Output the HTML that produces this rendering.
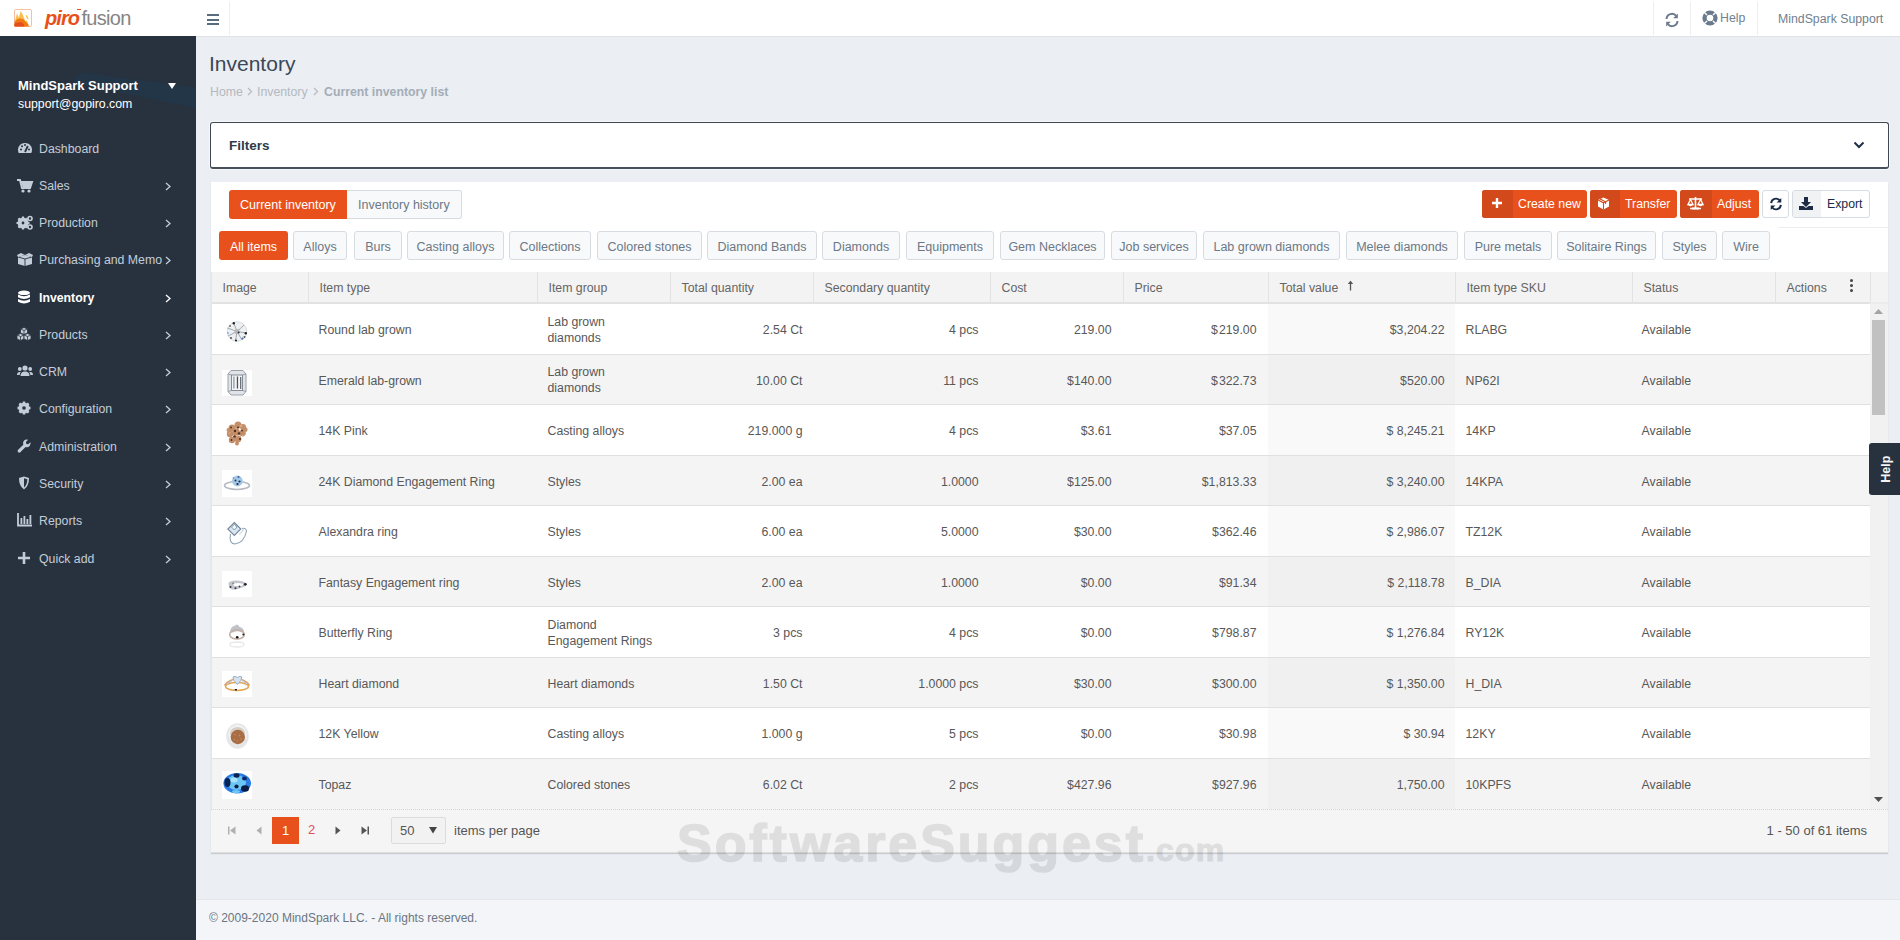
<!DOCTYPE html>
<html><head><meta charset="utf-8">
<style>
*{box-sizing:border-box;margin:0;padding:0}
html,body{width:1900px;height:940px;overflow:hidden}
body{position:relative;background:#ebeef2;font-family:"Liberation Sans",sans-serif;color:#555;font-size:12px}
.a{position:absolute}
#hdr{left:0;top:0;width:1900px;height:36px;background:#fff}
#hdrline{left:196px;top:36px;width:1704px;height:1px;background:#dfe3e8}
.vsep{top:2px;width:1px;height:33px;background:#eceef1}
#side{left:0;top:36px;width:196px;height:904px;background:#28323e;overflow:hidden}
.mi{position:absolute;left:0;width:196px;height:20px;color:#c3cdd8;font-size:12.3px}
.mi .ic{position:absolute;left:17px;top:2px;width:16px;height:14px}
.mi .tx{position:absolute;left:39px;top:3px;white-space:nowrap}
.mi .ar{position:absolute;left:165px;top:5px}
.nw{white-space:nowrap}
</style></head><body>

<!-- header -->
<div id="hdr" class="a">
  <!-- logo icon -->
  <svg class="a" style="left:14px;top:9px" width="18" height="18" viewBox="0 0 18 18">
    <rect x="0.5" y="0.5" width="17" height="17" rx="1.5" fill="#fff" stroke="#f5bfa6" stroke-width="1"/>
    <path d="M1 12 L3 4.5 L4.8 8.5 L6.8 2 L9.8 8 L11.2 12.5 L12.8 11.2 L14.5 16 L1 16 Z" fill="#fbbd4c"/>
    <path d="M12.2 6.3 L14 10" stroke="#fbc24f" stroke-width="1.5"/>
    <path d="M0.5 17.5 L0.5 13 Q3 9.2 7 9.6 Q10 10 12 13 L14 15 Q15 16.5 15 17.5 Z" fill="#ef7a14"/>
    <path d="M0.5 17.5 V14.8 Q3 12.8 7 13.2 Q9.5 13.6 10.5 17.5 Z" fill="#e44d1b"/>
  </svg>
  <div class="a nw" style="left:45px;top:8px;font-size:20px;line-height:20px;font-style:italic;font-weight:700;color:#e8501a;letter-spacing:-0.9px">piro</div>
  <div class="a" style="left:76.5px;top:9.3px;width:4.5px;height:1.2px;background:#e8501a"></div>
  <div class="a nw" style="left:81.5px;top:8px;font-size:20px;line-height:20px;color:#858585;letter-spacing:-0.7px">fusion</div>
  <!-- hamburger -->
  <div class="a" style="left:207px;top:14px;width:12px;height:2px;background:#5b6b7e"></div>
  <div class="a" style="left:207px;top:18.5px;width:12px;height:2px;background:#5b6b7e"></div>
  <div class="a" style="left:207px;top:23px;width:12px;height:2px;background:#5b6b7e"></div>
  <div class="a vsep" style="left:229px"></div>
  <div class="a vsep" style="left:1653px"></div>
  <div class="a vsep" style="left:1690px"></div>
  <div class="a vsep" style="left:1757px"></div>
  <!-- refresh -->
  <svg class="a" style="left:1664px;top:12px" width="16" height="16" viewBox="0 0 16 16">
    <path d="M2.5 7 A5.5 5.5 0 0 1 12.3 4" fill="none" stroke="#6a7a8c" stroke-width="2"/>
    <path d="M13.8 1.5 L13.8 6.2 L9.2 6.2 Z" fill="#6a7a8c"/>
    <path d="M13.5 9 A5.5 5.5 0 0 1 3.7 12" fill="none" stroke="#6a7a8c" stroke-width="2"/>
    <path d="M2.2 14.5 L2.2 9.8 L6.8 9.8 Z" fill="#6a7a8c"/>
  </svg>
  <!-- help lifebuoy -->
  <svg class="a" style="left:1702px;top:10px" width="16" height="16" viewBox="0 0 16 16">
    <circle cx="8" cy="8" r="7.6" fill="#6a7a8c"/><circle cx="8" cy="8" r="3.3" fill="#fff"/>
    <path d="M2.2 2.2 L5 5 M13.8 2.2 L11 5 M2.2 13.8 L5 11 M13.8 13.8 L11 11" stroke="#fff" stroke-width="1.4"/>
  </svg>
  <div class="a nw" style="left:1720px;top:10.7px;font-size:12.3px;color:#717f8f">Help</div>
  <div class="a nw" style="left:1778px;top:11.7px;font-size:12.3px;color:#717f8f">MindSpark Support</div>
</div>
<div id="hdrline" class="a"></div>

<!-- sidebar -->
<div id="side" class="a">
<svg class="a" style="left:0;top:0" width="196" height="80" viewBox="0 0 196 80"><path d="M73 47 Q76 38 82 36.6 L196 51.4 L196 72 Z" fill="#233647"/></svg>
<div class="a nw" style="left:18px;top:41.7px;font-size:13px;font-weight:700;color:#fff">MindSpark Support</div>
<svg class="a" style="left:168px;top:47px" width="8" height="6" viewBox="0 0 8 6"><path d="M0 0 L8 0 L4 6 Z" fill="#fff"/></svg>
<div class="a nw" style="left:18px;top:60.5px;font-size:12.3px;color:#fff">support@gopiro.com</div>
<div class="a" style="left:17px;top:104.5px;width:16px;height:16px"><svg width="16" height="16" viewBox="0 0 16 16" style="overflow:visible"><path d="M1.7 12 A7 7 0 1 1 14.3 12 Z" fill="#c3cdd8"/><path d="M8 11 L10.8 5" stroke="#28323e" stroke-width="1.8"/><circle cx="4" cy="8.5" r="1" fill="#28323e"/><circle cx="5" cy="5.2" r="1" fill="#28323e"/><circle cx="8" cy="4" r="1" fill="#28323e"/><circle cx="12" cy="8.5" r="1" fill="#28323e"/></svg></div>
<div class="a nw" style="left:39px;top:105.7px;font-size:12.3px;color:#c3cdd8;font-weight:400">Dashboard</div>
<div class="a" style="left:17px;top:141.5px;width:16px;height:16px"><svg width="16" height="16" viewBox="0 0 16 16" style="overflow:visible"><path d="M0 2 L3 2 L5 10 L13 10 L15 4 L4 4" fill="none" stroke="#c3cdd8" stroke-width="2"/><path d="M4.5 4 L14.5 4 L12.8 9 L5.5 9 Z" fill="#c3cdd8"/><circle cx="6" cy="13" r="1.6" fill="#c3cdd8"/><circle cx="12" cy="13" r="1.6" fill="#c3cdd8"/></svg></div>
<div class="a nw" style="left:39px;top:142.7px;font-size:12.3px;color:#c3cdd8;font-weight:400">Sales</div>
<svg class="a" style="left:165px;top:145.5px" width="6" height="9" viewBox="0 0 6 9"><path d="M1 1 L5 4.5 L1 8" fill="none" stroke="#c3cdd8" stroke-width="1.3"/></svg>
<div class="a" style="left:17px;top:178.5px;width:16px;height:16px"><svg width="16" height="16" viewBox="0 0 16 16" style="overflow:visible"><circle cx="6" cy="8" r="4" fill="none" stroke="#c3cdd8" stroke-width="3"/><path d="M6 1.5 V14.5 M-0.5 8 H12.5 M1.4 3.4 L10.6 12.6 M10.6 3.4 L1.4 12.6" stroke="#c3cdd8" stroke-width="2.2"/><circle cx="6" cy="8" r="1.4" fill="#28323e"/><circle cx="13" cy="3.5" r="2" fill="none" stroke="#c3cdd8" stroke-width="1.6"/><circle cx="13" cy="12" r="2" fill="none" stroke="#c3cdd8" stroke-width="1.6"/></svg></div>
<div class="a nw" style="left:39px;top:179.7px;font-size:12.3px;color:#c3cdd8;font-weight:400">Production</div>
<svg class="a" style="left:165px;top:182.5px" width="6" height="9" viewBox="0 0 6 9"><path d="M1 1 L5 4.5 L1 8" fill="none" stroke="#c3cdd8" stroke-width="1.3"/></svg>
<div class="a" style="left:17px;top:216.0px;width:16px;height:16px"><svg width="16" height="16" viewBox="0 0 16 16" style="overflow:visible"><path d="M1 5 L8 3 L15 5 L15 12 L8 14 L1 12 Z" fill="#c3cdd8"/><path d="M1 5 L8 7 L15 5 M8 7 V14" stroke="#28323e" stroke-width="0.9" fill="none"/><path d="M0 3 L4 1 L8 3 L12 1 L16 3 L15 5 L8 3 L1 5 Z" fill="#c3cdd8"/></svg></div>
<div class="a nw" style="left:39px;top:217.2px;font-size:12.3px;color:#c3cdd8;font-weight:400">Purchasing and Memo</div>
<svg class="a" style="left:165px;top:220.0px" width="6" height="9" viewBox="0 0 6 9"><path d="M1 1 L5 4.5 L1 8" fill="none" stroke="#c3cdd8" stroke-width="1.3"/></svg>
<div class="a" style="left:17px;top:253.5px;width:16px;height:16px"><svg width="16" height="16" viewBox="0 0 16 16" style="overflow:visible"><ellipse cx="7" cy="2.8" rx="6" ry="2.3" fill="#fff"/><path d="M1 4.5 Q7 8 13 4.5 V7.3 Q7 10.8 1 7.3 Z" fill="#fff"/><path d="M1 9 Q7 12.5 13 9 V11.8 Q7 15.3 1 11.8 Z" fill="#fff"/></svg></div>
<div class="a nw" style="left:39px;top:254.7px;font-size:12.3px;color:#fff;font-weight:700">Inventory</div>
<svg class="a" style="left:165px;top:257.5px" width="6" height="9" viewBox="0 0 6 9"><path d="M1 1 L5 4.5 L1 8" fill="none" stroke="#fff" stroke-width="1.3"/></svg>
<div class="a" style="left:17px;top:290.5px;width:16px;height:16px"><svg width="16" height="16" viewBox="0 0 16 16" style="overflow:visible"><g fill="#c3cdd8" stroke="#28323e" stroke-width="0.8"><path d="M7 0.5 L10.5 2 L10.5 6 L7 7.5 L3.5 6 L3.5 2 Z"/><path d="M3.5 6.5 L7 8 L7 12 L3.5 13.5 L0 12 L0 8 Z"/><path d="M10.5 6.5 L14 8 L14 12 L10.5 13.5 L7 12 L7 8 Z"/></g><path d="M3.5 2 L7 3.5 L10.5 2 M7 3.5 V7.5 M0 8 L3.5 9.5 L7 8 M3.5 9.5 V13.5 M7 8 L10.5 9.5 L14 8 M10.5 9.5 V13.5" fill="none" stroke="#28323e" stroke-width="0.8"/></svg></div>
<div class="a nw" style="left:39px;top:291.7px;font-size:12.3px;color:#c3cdd8;font-weight:400">Products</div>
<svg class="a" style="left:165px;top:294.5px" width="6" height="9" viewBox="0 0 6 9"><path d="M1 1 L5 4.5 L1 8" fill="none" stroke="#c3cdd8" stroke-width="1.3"/></svg>
<div class="a" style="left:17px;top:327.5px;width:16px;height:16px"><svg width="16" height="16" viewBox="0 0 16 16" style="overflow:visible"><circle cx="8" cy="4" r="2.6" fill="#c3cdd8"/><path d="M3.5 12 Q3.5 7.5 8 7.5 Q12.5 7.5 12.5 12 Z" fill="#c3cdd8"/><circle cx="2.8" cy="5" r="1.9" fill="#c3cdd8"/><circle cx="13.2" cy="5" r="1.9" fill="#c3cdd8"/><path d="M0 11 Q0 8 2.8 8 Q3.5 8 3.8 8.3 Q2.6 9.5 2.7 11 Z" fill="#c3cdd8"/><path d="M16 11 Q16 8 13.2 8 Q12.5 8 12.2 8.3 Q13.4 9.5 13.3 11 Z" fill="#c3cdd8"/></svg></div>
<div class="a nw" style="left:39px;top:328.7px;font-size:12.3px;color:#c3cdd8;font-weight:400">CRM</div>
<svg class="a" style="left:165px;top:331.5px" width="6" height="9" viewBox="0 0 6 9"><path d="M1 1 L5 4.5 L1 8" fill="none" stroke="#c3cdd8" stroke-width="1.3"/></svg>
<div class="a" style="left:17px;top:364.5px;width:16px;height:16px"><svg width="16" height="16" viewBox="0 0 16 16" style="overflow:visible"><circle cx="7" cy="7" r="4" fill="none" stroke="#c3cdd8" stroke-width="3.2"/><path d="M7 0.5 V13.5 M0.5 7 H13.5 M2.4 2.4 L11.6 11.6 M11.6 2.4 L2.4 11.6" stroke="#c3cdd8" stroke-width="2.4"/><circle cx="7" cy="7" r="1.8" fill="#28323e"/></svg></div>
<div class="a nw" style="left:39px;top:365.7px;font-size:12.3px;color:#c3cdd8;font-weight:400">Configuration</div>
<svg class="a" style="left:165px;top:368.5px" width="6" height="9" viewBox="0 0 6 9"><path d="M1 1 L5 4.5 L1 8" fill="none" stroke="#c3cdd8" stroke-width="1.3"/></svg>
<div class="a" style="left:17px;top:402.5px;width:16px;height:16px"><svg width="16" height="16" viewBox="0 0 16 16" style="overflow:visible"><path d="M13.5 3.2 L11.2 5.3 L9.4 4.9 L8.9 3 L11.1 0.8 Q8.5 0 6.9 1.8 Q5.5 3.4 6.3 5.7 L0.9 11.1 Q0.1 12.3 1.2 13.3 Q2.3 14.2 3.3 13.3 L8.6 7.9 Q10.9 8.6 12.4 7.2 Q14.1 5.6 13.5 3.2 Z" fill="#c3cdd8"/></svg></div>
<div class="a nw" style="left:39px;top:403.7px;font-size:12.3px;color:#c3cdd8;font-weight:400">Administration</div>
<svg class="a" style="left:165px;top:406.5px" width="6" height="9" viewBox="0 0 6 9"><path d="M1 1 L5 4.5 L1 8" fill="none" stroke="#c3cdd8" stroke-width="1.3"/></svg>
<div class="a" style="left:17px;top:439.5px;width:16px;height:16px"><svg width="16" height="16" viewBox="0 0 16 16" style="overflow:visible"><path d="M2 2 L7 0.5 L12 2 Q12 10 7 13.5 Q2 10 2 2 Z" fill="#c3cdd8"/><path d="M7 2.2 L10.3 3.2 Q10.2 9 7 11.4 Z" fill="#28323e"/></svg></div>
<div class="a nw" style="left:39px;top:440.7px;font-size:12.3px;color:#c3cdd8;font-weight:400">Security</div>
<svg class="a" style="left:165px;top:443.5px" width="6" height="9" viewBox="0 0 6 9"><path d="M1 1 L5 4.5 L1 8" fill="none" stroke="#c3cdd8" stroke-width="1.3"/></svg>
<div class="a" style="left:17px;top:476.5px;width:16px;height:16px"><svg width="16" height="16" viewBox="0 0 16 16" style="overflow:visible"><path d="M1 0 V12.5 H15" fill="none" stroke="#c3cdd8" stroke-width="1.8"/><rect x="3.5" y="5" width="1.8" height="6" fill="#c3cdd8"/><rect x="6.5" y="3" width="1.8" height="8" fill="#c3cdd8"/><rect x="9.5" y="6" width="1.8" height="5" fill="#c3cdd8"/><rect x="12.5" y="2" width="1.8" height="9" fill="#c3cdd8"/></svg></div>
<div class="a nw" style="left:39px;top:477.7px;font-size:12.3px;color:#c3cdd8;font-weight:400">Reports</div>
<svg class="a" style="left:165px;top:480.5px" width="6" height="9" viewBox="0 0 6 9"><path d="M1 1 L5 4.5 L1 8" fill="none" stroke="#c3cdd8" stroke-width="1.3"/></svg>
<div class="a" style="left:17px;top:514.5px;width:16px;height:16px"><svg width="16" height="16" viewBox="0 0 16 16" style="overflow:visible"><path d="M7 1 V13 M1 7 H13" stroke="#c3cdd8" stroke-width="2.6"/></svg></div>
<div class="a nw" style="left:39px;top:515.7px;font-size:12.3px;color:#c3cdd8;font-weight:400">Quick add</div>
<svg class="a" style="left:165px;top:518.5px" width="6" height="9" viewBox="0 0 6 9"><path d="M1 1 L5 4.5 L1 8" fill="none" stroke="#c3cdd8" stroke-width="1.3"/></svg>
</div>
<div class="a nw" style="left:209px;top:53px;font-size:21px;line-height:21px;color:#3a4756">Inventory</div>
<div class="a nw" style="left:210px;top:86px;font-size:12.3px;line-height:12.3px;color:#b3b9c0">Home</div>
<svg class="a" style="left:247px;top:87px" width="6" height="9" viewBox="0 0 6 9"><path d="M1 1 L4.5 4.5 L1 8" fill="none" stroke="#b7bdc4" stroke-width="1.3"/></svg>
<div class="a nw" style="left:257px;top:86px;font-size:12.3px;line-height:12.3px;color:#b3b9c0">Inventory</div>
<svg class="a" style="left:313px;top:87px" width="6" height="9" viewBox="0 0 6 9"><path d="M1 1 L4.5 4.5 L1 8" fill="none" stroke="#b7bdc4" stroke-width="1.3"/></svg>
<div class="a nw" style="left:324px;top:86px;font-size:12.3px;line-height:12.3px;color:#a3adb8;font-weight:700">Current inventory list</div>
<div class="a" style="left:210px;top:122px;width:1679px;height:47px;background:#fff;border:1px solid #3e4752;border-bottom:2px solid #46505a;border-radius:3px;box-shadow:0 0 0 1px #f6f8fa"></div>
<div class="a nw" style="left:229px;top:139px;font-size:13.5px;line-height:13.5px;color:#2f3b48;font-weight:700">Filters</div>
<svg class="a" style="left:1853px;top:141px" width="12" height="8" viewBox="0 0 12 8"><path d="M1.5 1.5 L6 6 L10.5 1.5" fill="none" stroke="#1f2f45" stroke-width="2"/></svg>
<div class="a" style="left:211px;top:182px;width:1677px;height:671px;background:#fff;box-shadow:0 1px 1px rgba(0,0,0,.14)"></div>
<div class="a" style="left:229px;top:190px;width:118px;height:29px;background:#e9511c;border-radius:3px 0 0 3px"></div>
<div class="a nw" style="left:240px;top:199px;font-size:12.5px;line-height:12.5px;color:#fff">Current inventory</div>
<div class="a" style="left:347px;top:190px;width:115px;height:29px;background:#f8f9fa;border:1px solid #d6dce2;border-left:0;border-radius:0 3px 3px 0"></div>
<div class="a nw" style="left:358px;top:199px;font-size:12.5px;line-height:12.5px;color:#6b7886">Inventory history</div>
<div class="a" style="left:1482px;top:190px;width:105px;height:28px;background:#e9511c;border-radius:3px;overflow:hidden"><div class="a" style="left:0;top:0;width:31px;height:28px;background:#d24a1b"></div></div>
<div class="a nw" style="left:1518px;top:198px;font-size:12.3px;line-height:12.3px;color:#fff">Create new</div>
<svg class="a" style="left:1491px;top:197px" width="12" height="12" viewBox="0 0 12 12"><path d="M6 1 V11 M1 6 H11" stroke="#fff" stroke-width="2.4"/></svg>
<div class="a" style="left:1590px;top:190px;width:87px;height:28px;background:#e9511c;border-radius:3px;overflow:hidden"><div class="a" style="left:0;top:0;width:30px;height:28px;background:#d24a1b"></div></div>
<div class="a nw" style="left:1625px;top:198px;font-size:12.3px;line-height:12.3px;color:#fff">Transfer</div>
<svg class="a" style="left:1597px;top:197px" width="13" height="13" viewBox="0 0 13 13"><path d="M6.5 0.5 L12 3 L12 9.5 L6.5 12.5 L1 9.5 L1 3 Z" fill="#fff"/><path d="M1 3 L6.5 5.8 L12 3 M6.5 5.8 V12.5" stroke="#d24a1b" stroke-width="1.1" fill="none"/><path d="M3.8 1.8 L9.2 4.4 V6.6 L8 7.2 V5.1 L2.6 2.5 Z" fill="#d24a1b"/></svg>
<div class="a" style="left:1680px;top:190px;width:79px;height:28px;background:#e9511c;border-radius:3px;overflow:hidden"><div class="a" style="left:0;top:0;width:32px;height:28px;background:#d24a1b"></div></div>
<div class="a nw" style="left:1717px;top:198px;font-size:12.3px;line-height:12.3px;color:#fff">Adjust</div>
<svg class="a" style="left:1687px;top:196px" width="17" height="14" viewBox="0 0 17 14"><path d="M8.5 1 V12 M3 12.5 H14 M2 3 H15" stroke="#fff" stroke-width="1.6"/><path d="M3.5 3.5 L1 8.5 H6 Z M13.5 3.5 L11 8.5 H16 Z" fill="none" stroke="#fff" stroke-width="1.3"/><path d="M0.8 8.3 H6.2 Q5.5 10.3 3.5 10.3 Q1.5 10.3 0.8 8.3 Z M10.8 8.3 H16.2 Q15.5 10.3 13.5 10.3 Q11.5 10.3 10.8 8.3 Z" fill="#fff"/><rect x="5" y="11.5" width="7" height="2" fill="#fff"/></svg>
<div class="a" style="left:1762px;top:190px;width:27px;height:28px;background:#fff;border:1px solid #d6dce2;border-radius:3px"></div>
<svg class="a" style="left:1769px;top:197px" width="14" height="14" viewBox="0 0 16 16"><path d="M2.5 7 A5.5 5.5 0 0 1 12.3 4" fill="none" stroke="#1b2b45" stroke-width="2.2"/><path d="M14 1.2 L14 6.4 L8.8 6.4 Z" fill="#1b2b45"/><path d="M13.5 9 A5.5 5.5 0 0 1 3.7 12" fill="none" stroke="#1b2b45" stroke-width="2.2"/><path d="M2 14.8 L2 9.6 L7.2 9.6 Z" fill="#1b2b45"/></svg>
<div class="a" style="left:1792px;top:190px;width:78px;height:28px;background:#fff;border:1px solid #d6dce2;border-radius:3px;overflow:hidden"><div class="a" style="left:0;top:0;width:28px;height:28px;background:#f1f2f4"></div></div>
<svg class="a" style="left:1799px;top:197px" width="14" height="13" viewBox="0 0 14 13"><path d="M5 0 H9 V5 H12 L7 10 L2 5 H5 Z" fill="#1b2b45"/><path d="M0 9 H4.5 L7 11 L9.5 9 H14 V13 H0 Z" fill="#1b2b45"/></svg>
<div class="a nw" style="left:1827px;top:198px;font-size:12.3px;line-height:12.3px;color:#1b2b45">Export</div>
<div class="a" style="left:1778px;top:227px;width:110px;height:1px;background:#eceef1"></div>
<div class="a" style="left:219px;top:231px;width:69px;height:29px;background:#e9511c;border-radius:3px;font-size:12.5px;line-height:33px;text-align:center;color:#fff;white-space:nowrap">All items</div>
<div class="a" style="left:293px;top:231px;width:54px;height:29px;background:#f8f9fa;border:1px solid #d6dce2;border-radius:3px;font-size:12.5px;line-height:31px;text-align:center;color:#6b7886;white-space:nowrap">Alloys</div>
<div class="a" style="left:354px;top:231px;width:48px;height:29px;background:#f8f9fa;border:1px solid #d6dce2;border-radius:3px;font-size:12.5px;line-height:31px;text-align:center;color:#6b7886;white-space:nowrap">Burs</div>
<div class="a" style="left:407px;top:231px;width:97px;height:29px;background:#f8f9fa;border:1px solid #d6dce2;border-radius:3px;font-size:12.5px;line-height:31px;text-align:center;color:#6b7886;white-space:nowrap">Casting alloys</div>
<div class="a" style="left:509px;top:231px;width:82px;height:29px;background:#f8f9fa;border:1px solid #d6dce2;border-radius:3px;font-size:12.5px;line-height:31px;text-align:center;color:#6b7886;white-space:nowrap">Collections</div>
<div class="a" style="left:597px;top:231px;width:105px;height:29px;background:#f8f9fa;border:1px solid #d6dce2;border-radius:3px;font-size:12.5px;line-height:31px;text-align:center;color:#6b7886;white-space:nowrap">Colored stones</div>
<div class="a" style="left:707px;top:231px;width:110px;height:29px;background:#f8f9fa;border:1px solid #d6dce2;border-radius:3px;font-size:12.5px;line-height:31px;text-align:center;color:#6b7886;white-space:nowrap">Diamond Bands</div>
<div class="a" style="left:822px;top:231px;width:78px;height:29px;background:#f8f9fa;border:1px solid #d6dce2;border-radius:3px;font-size:12.5px;line-height:31px;text-align:center;color:#6b7886;white-space:nowrap">Diamonds</div>
<div class="a" style="left:906px;top:231px;width:88px;height:29px;background:#f8f9fa;border:1px solid #d6dce2;border-radius:3px;font-size:12.5px;line-height:31px;text-align:center;color:#6b7886;white-space:nowrap">Equipments</div>
<div class="a" style="left:1000px;top:231px;width:105px;height:29px;background:#f8f9fa;border:1px solid #d6dce2;border-radius:3px;font-size:12.5px;line-height:31px;text-align:center;color:#6b7886;white-space:nowrap">Gem Necklaces</div>
<div class="a" style="left:1111px;top:231px;width:86px;height:29px;background:#f8f9fa;border:1px solid #d6dce2;border-radius:3px;font-size:12.5px;line-height:31px;text-align:center;color:#6b7886;white-space:nowrap">Job services</div>
<div class="a" style="left:1203px;top:231px;width:137px;height:29px;background:#f8f9fa;border:1px solid #d6dce2;border-radius:3px;font-size:12.5px;line-height:31px;text-align:center;color:#6b7886;white-space:nowrap">Lab grown diamonds</div>
<div class="a" style="left:1346px;top:231px;width:112px;height:29px;background:#f8f9fa;border:1px solid #d6dce2;border-radius:3px;font-size:12.5px;line-height:31px;text-align:center;color:#6b7886;white-space:nowrap">Melee diamonds</div>
<div class="a" style="left:1464px;top:231px;width:88px;height:29px;background:#f8f9fa;border:1px solid #d6dce2;border-radius:3px;font-size:12.5px;line-height:31px;text-align:center;color:#6b7886;white-space:nowrap">Pure metals</div>
<div class="a" style="left:1557px;top:231px;width:99px;height:29px;background:#f8f9fa;border:1px solid #d6dce2;border-radius:3px;font-size:12.5px;line-height:31px;text-align:center;color:#6b7886;white-space:nowrap">Solitaire Rings</div>
<div class="a" style="left:1662px;top:231px;width:55px;height:29px;background:#f8f9fa;border:1px solid #d6dce2;border-radius:3px;font-size:12.5px;line-height:31px;text-align:center;color:#6b7886;white-space:nowrap">Styles</div>
<div class="a" style="left:1722px;top:231px;width:48px;height:29px;background:#f8f9fa;border:1px solid #d6dce2;border-radius:3px;font-size:12.5px;line-height:31px;text-align:center;color:#6b7886;white-space:nowrap">Wire</div>
<div class="a" style="left:211px;top:272px;width:1677px;height:30px;background:#f3f3f3"></div>
<div class="a" style="left:211px;top:302px;width:1659px;height:2px;background:#e2e2e2"></div>
<div class="a" style="left:1870px;top:302px;width:18px;height:2px;background:#ececec"></div>
<div class="a" style="left:308px;top:272px;width:1px;height:30px;background:#e3e3e3"></div>
<div class="a" style="left:537px;top:272px;width:1px;height:30px;background:#e3e3e3"></div>
<div class="a" style="left:670px;top:272px;width:1px;height:30px;background:#e3e3e3"></div>
<div class="a" style="left:813px;top:272px;width:1px;height:30px;background:#e3e3e3"></div>
<div class="a" style="left:990px;top:272px;width:1px;height:30px;background:#e3e3e3"></div>
<div class="a" style="left:1123px;top:272px;width:1px;height:30px;background:#e3e3e3"></div>
<div class="a" style="left:1268px;top:272px;width:1px;height:30px;background:#e3e3e3"></div>
<div class="a" style="left:1455px;top:272px;width:1px;height:30px;background:#e3e3e3"></div>
<div class="a" style="left:1632px;top:272px;width:1px;height:30px;background:#e3e3e3"></div>
<div class="a" style="left:1775px;top:272px;width:1px;height:30px;background:#e3e3e3"></div>
<div class="a" style="left:1870px;top:272px;width:1px;height:30px;background:#e3e3e3"></div>
<div class="a nw" style="left:222.5px;top:282px;font-size:12.3px;line-height:12.3px;color:#656565">Image</div>
<div class="a nw" style="left:319.5px;top:282px;font-size:12.3px;line-height:12.3px;color:#656565">Item type</div>
<div class="a nw" style="left:548.5px;top:282px;font-size:12.3px;line-height:12.3px;color:#656565">Item group</div>
<div class="a nw" style="left:681.5px;top:282px;font-size:12.3px;line-height:12.3px;color:#656565">Total quantity</div>
<div class="a nw" style="left:824.5px;top:282px;font-size:12.3px;line-height:12.3px;color:#656565">Secondary quantity</div>
<div class="a nw" style="left:1001.5px;top:282px;font-size:12.3px;line-height:12.3px;color:#656565">Cost</div>
<div class="a nw" style="left:1134.5px;top:282px;font-size:12.3px;line-height:12.3px;color:#656565">Price</div>
<div class="a nw" style="left:1279.5px;top:282px;font-size:12.3px;line-height:12.3px;color:#656565">Total value</div>
<div class="a nw" style="left:1466.5px;top:282px;font-size:12.3px;line-height:12.3px;color:#656565">Item type SKU</div>
<div class="a nw" style="left:1643.5px;top:282px;font-size:12.3px;line-height:12.3px;color:#656565">Status</div>
<div class="a nw" style="left:1786.5px;top:282px;font-size:12.3px;line-height:12.3px;color:#656565">Actions</div>
<svg class="a" style="left:1347px;top:280px" width="7" height="11" viewBox="0 0 7 11"><path d="M3.5 1.5 V10.5" stroke="#555" stroke-width="1.3"/><path d="M0.8 4 L3.5 0.8 L6.2 4 Z" fill="#555"/></svg>
<div class="a" style="left:1850px;top:279px;width:3px;height:3px;border-radius:50%;background:#444"></div>
<div class="a" style="left:1850px;top:284px;width:3px;height:3px;border-radius:50%;background:#444"></div>
<div class="a" style="left:1850px;top:289px;width:3px;height:3px;border-radius:50%;background:#444"></div>
<div class="a" style="left:211px;top:304.0px;width:1659px;height:50.5px;background:#fff"></div>
<div class="a" style="left:1268px;top:304.0px;width:187px;height:50.5px;background:#f9f9f9"></div>
<div class="a" style="left:211px;top:353.5px;width:1659px;height:1px;background:#e0e0e0"></div>
<svg class="a" style="left:218px;top:316px" width="38" height="36" viewBox="0 0 38 36"><circle cx="19" cy="15.5" r="9.8" fill="#eef0f2" stroke="#d0d4d8" stroke-width="0.8"/><g stroke="#8f959b" stroke-width="0.8"><path d="M19 15.5 L15.5 6.5 M19 15.5 L26 9 M19 15.5 L28.5 17 M19 15.5 L24 24 M19 15.5 L17.5 25 M19 15.5 L10 20 M19 15.5 L9.5 12"/></g><circle cx="19" cy="15.5" r="2.6" fill="#b4b8bc"/><circle cx="15.8" cy="7.2" r="1.2" fill="#1f2328"/><circle cx="27.8" cy="17.3" r="1.2" fill="#1f2328"/><circle cx="18" cy="24.5" r="1.1" fill="#22262b"/><circle cx="20.6" cy="16.4" r="1" fill="#30343a"/><circle cx="13" cy="22" r="1" fill="#4a4f55"/><circle cx="26.5" cy="21" r="1" fill="#50555b"/><circle cx="10" cy="17" r="0.9" fill="#7aa7d8"/><circle cx="24.5" cy="22.6" r="1" fill="#3d6db0"/><circle cx="12" cy="10" r="0.9" fill="#5d6268"/></svg>
<div class="a nw" style="left:318.5px;top:324.3px;font-size:12.3px;line-height:12.3px;color:#585858">Round lab grown</div>
<div class="a nw" style="left:547.5px;top:313.6px;font-size:12.3px;line-height:16px;color:#585858">Lab grown<br>diamonds</div>
<div class="a nw" style="left:502.5px;width:300px;text-align:right;top:324.3px;font-size:12.3px;line-height:12.3px;color:#585858">2.54 Ct</div>
<div class="a nw" style="left:678.5px;width:300px;text-align:right;top:324.3px;font-size:12.3px;line-height:12.3px;color:#585858">4 pcs</div>
<div class="a nw" style="left:811.5px;width:300px;text-align:right;top:324.3px;font-size:12.3px;line-height:12.3px;color:#585858">219.00</div>
<div class="a nw" style="left:956.5px;width:300px;text-align:right;top:324.3px;font-size:12.3px;line-height:12.3px;color:#585858">$&#8202;219.00</div>
<div class="a nw" style="left:1144.5px;width:300px;text-align:right;top:324.3px;font-size:12.3px;line-height:12.3px;color:#585858">$3,204.22</div>
<div class="a nw" style="left:1465.5px;top:324.3px;font-size:12.3px;line-height:12.3px;color:#585858">RLABG</div>
<div class="a nw" style="left:1641.5px;top:324.3px;font-size:12.3px;line-height:12.3px;color:#585858">Available</div>
<div class="a" style="left:211px;top:354.5px;width:1659px;height:50.5px;background:#f4f4f4"></div>
<div class="a" style="left:1268px;top:354.5px;width:187px;height:50.5px;background:#f0f0f0"></div>
<div class="a" style="left:211px;top:404.0px;width:1659px;height:1px;background:#e0e0e0"></div>
<svg class="a" style="left:218px;top:366px" width="38" height="36" viewBox="0 0 38 36"><rect x="4" y="4" width="30" height="26" fill="#fff"/><path d="M13 4.5 H25 L28 8 V25.5 L25 29 H13 L10 25.5 V8 Z" fill="#e1e5ea" stroke="#9aa1a9" stroke-width="1"/><rect x="13.5" y="9" width="11" height="15.5" fill="#f4f5f7" stroke="#7a8189" stroke-width="0.9"/><rect x="18.8" y="10.5" width="1.3" height="12" fill="#4a515c"/><rect x="22" y="11" width="1.3" height="12" fill="#6a727c"/><rect x="15.3" y="10.5" width="1.2" height="12" fill="#8a9099"/><path d="M10 8 L13.5 9 M28 8 L24.5 9 M10 25.5 L13.5 24.5 M28 25.5 L24.5 24.5" stroke="#8a9199" stroke-width="0.8"/></svg>
<div class="a nw" style="left:318.5px;top:374.8px;font-size:12.3px;line-height:12.3px;color:#585858">Emerald lab-grown</div>
<div class="a nw" style="left:547.5px;top:364.1px;font-size:12.3px;line-height:16px;color:#585858">Lab grown<br>diamonds</div>
<div class="a nw" style="left:502.5px;width:300px;text-align:right;top:374.8px;font-size:12.3px;line-height:12.3px;color:#585858">10.00 Ct</div>
<div class="a nw" style="left:678.5px;width:300px;text-align:right;top:374.8px;font-size:12.3px;line-height:12.3px;color:#585858">11 pcs</div>
<div class="a nw" style="left:811.5px;width:300px;text-align:right;top:374.8px;font-size:12.3px;line-height:12.3px;color:#585858">$140.00</div>
<div class="a nw" style="left:956.5px;width:300px;text-align:right;top:374.8px;font-size:12.3px;line-height:12.3px;color:#585858">$&#8202;322.73</div>
<div class="a nw" style="left:1144.5px;width:300px;text-align:right;top:374.8px;font-size:12.3px;line-height:12.3px;color:#585858">$520.00</div>
<div class="a nw" style="left:1465.5px;top:374.8px;font-size:12.3px;line-height:12.3px;color:#585858">NP62I</div>
<div class="a nw" style="left:1641.5px;top:374.8px;font-size:12.3px;line-height:12.3px;color:#585858">Available</div>
<div class="a" style="left:211px;top:405.0px;width:1659px;height:50.5px;background:#fff"></div>
<div class="a" style="left:1268px;top:405.0px;width:187px;height:50.5px;background:#f9f9f9"></div>
<div class="a" style="left:211px;top:454.5px;width:1659px;height:1px;background:#e0e0e0"></div>
<svg class="a" style="left:218px;top:416px" width="38" height="36" viewBox="0 0 38 36"><g fill="#c48e68"><circle cx="14" cy="12" r="3.5"/><circle cx="20" cy="9" r="3.5"/><circle cx="25" cy="11" r="3"/><circle cx="12" cy="18" r="3.2"/><circle cx="18" cy="16" r="3.8"/><circle cx="24.5" cy="17" r="3.3"/><circle cx="14" cy="24" r="3.2"/><circle cx="20" cy="23" r="3.4"/><circle cx="27" cy="13.5" r="2.5"/><circle cx="19" cy="27.5" r="2"/><circle cx="10.5" cy="14" r="2"/></g><g fill="#4a3022"><circle cx="17" cy="15" r="1.2"/><circle cx="21" cy="17.5" r="1.3"/><circle cx="16.5" cy="20.5" r="1.3"/><circle cx="20" cy="11.5" r="1"/><circle cx="13" cy="11.5" r="0.9"/><circle cx="24" cy="14.5" r="0.9"/><circle cx="22" cy="23" r="1.1"/><circle cx="13.5" cy="24" r="0.9"/></g><g fill="#e7b48e"><circle cx="23" cy="10" r="1"/><circle cx="11.5" cy="17" r="0.8"/><circle cx="19" cy="20" r="0.8"/><circle cx="25" cy="20" r="0.8"/></g></svg>
<div class="a nw" style="left:318.5px;top:425.3px;font-size:12.3px;line-height:12.3px;color:#585858">14K Pink</div>
<div class="a nw" style="left:547.5px;top:425.3px;font-size:12.3px;line-height:12.3px;color:#585858">Casting alloys</div>
<div class="a nw" style="left:502.5px;width:300px;text-align:right;top:425.3px;font-size:12.3px;line-height:12.3px;color:#585858">219.000 g</div>
<div class="a nw" style="left:678.5px;width:300px;text-align:right;top:425.3px;font-size:12.3px;line-height:12.3px;color:#585858">4 pcs</div>
<div class="a nw" style="left:811.5px;width:300px;text-align:right;top:425.3px;font-size:12.3px;line-height:12.3px;color:#585858">$3.61</div>
<div class="a nw" style="left:956.5px;width:300px;text-align:right;top:425.3px;font-size:12.3px;line-height:12.3px;color:#585858">$37.05</div>
<div class="a nw" style="left:1144.5px;width:300px;text-align:right;top:425.3px;font-size:12.3px;line-height:12.3px;color:#585858">$ 8,245.21</div>
<div class="a nw" style="left:1465.5px;top:425.3px;font-size:12.3px;line-height:12.3px;color:#585858">14KP</div>
<div class="a nw" style="left:1641.5px;top:425.3px;font-size:12.3px;line-height:12.3px;color:#585858">Available</div>
<div class="a" style="left:211px;top:455.5px;width:1659px;height:50.5px;background:#f4f4f4"></div>
<div class="a" style="left:1268px;top:455.5px;width:187px;height:50.5px;background:#f0f0f0"></div>
<div class="a" style="left:211px;top:505.0px;width:1659px;height:1px;background:#e0e0e0"></div>
<svg class="a" style="left:218px;top:466px" width="38" height="36" viewBox="0 0 38 36"><rect x="4" y="4" width="30" height="27" fill="#fff"/><ellipse cx="19" cy="19.5" rx="12.5" ry="4" fill="none" stroke="#b5bbc1" stroke-width="1.6"/><circle cx="19.4" cy="15" r="5.4" fill="#a3c8e8"/><circle cx="17.5" cy="14.5" r="1" fill="#1b3550"/><circle cx="21.5" cy="15.5" r="1.1" fill="#1b3550"/><circle cx="19.5" cy="18" r="1.1" fill="#14263d"/><circle cx="20.5" cy="11" r="1" fill="#3a5f8a"/><circle cx="15.5" cy="12" r="0.8" fill="#5d87b5"/></svg>
<div class="a nw" style="left:318.5px;top:475.8px;font-size:12.3px;line-height:12.3px;color:#585858">24K Diamond Engagement Ring</div>
<div class="a nw" style="left:547.5px;top:475.8px;font-size:12.3px;line-height:12.3px;color:#585858">Styles</div>
<div class="a nw" style="left:502.5px;width:300px;text-align:right;top:475.8px;font-size:12.3px;line-height:12.3px;color:#585858">2.00 ea</div>
<div class="a nw" style="left:678.5px;width:300px;text-align:right;top:475.8px;font-size:12.3px;line-height:12.3px;color:#585858">1.0000</div>
<div class="a nw" style="left:811.5px;width:300px;text-align:right;top:475.8px;font-size:12.3px;line-height:12.3px;color:#585858">$125.00</div>
<div class="a nw" style="left:956.5px;width:300px;text-align:right;top:475.8px;font-size:12.3px;line-height:12.3px;color:#585858">$1,813.33</div>
<div class="a nw" style="left:1144.5px;width:300px;text-align:right;top:475.8px;font-size:12.3px;line-height:12.3px;color:#585858">$ 3,240.00</div>
<div class="a nw" style="left:1465.5px;top:475.8px;font-size:12.3px;line-height:12.3px;color:#585858">14KPA</div>
<div class="a nw" style="left:1641.5px;top:475.8px;font-size:12.3px;line-height:12.3px;color:#585858">Available</div>
<div class="a" style="left:211px;top:506.0px;width:1659px;height:50.5px;background:#fff"></div>
<div class="a" style="left:1268px;top:506.0px;width:187px;height:50.5px;background:#f9f9f9"></div>
<div class="a" style="left:211px;top:555.5px;width:1659px;height:1px;background:#e0e0e0"></div>
<svg class="a" style="left:218px;top:516px" width="38" height="36" viewBox="0 0 38 36"><path d="M16.3 6.5 L22.8 13 L16.3 19.5 L9.8 13 Z" fill="#d9e6f2" stroke="#73869a" stroke-width="1.1"/><path d="M13.5 11 L16.3 8.5 L19 11 L16.3 14 Z" fill="#f7fafc" stroke="#5c7896" stroke-width="0.7"/><path d="M12.5 18 Q10.5 27.5 17 28 Q26 27 28.5 15 Q28 11.5 24 12.5" fill="none" stroke="#8fa4b8" stroke-width="1.1"/><path d="M21 18.5 Q26 15 25.5 12.5" fill="none" stroke="#aebdcc" stroke-width="0.8"/></svg>
<div class="a nw" style="left:318.5px;top:526.3px;font-size:12.3px;line-height:12.3px;color:#585858">Alexandra ring</div>
<div class="a nw" style="left:547.5px;top:526.3px;font-size:12.3px;line-height:12.3px;color:#585858">Styles</div>
<div class="a nw" style="left:502.5px;width:300px;text-align:right;top:526.3px;font-size:12.3px;line-height:12.3px;color:#585858">6.00 ea</div>
<div class="a nw" style="left:678.5px;width:300px;text-align:right;top:526.3px;font-size:12.3px;line-height:12.3px;color:#585858">5.0000</div>
<div class="a nw" style="left:811.5px;width:300px;text-align:right;top:526.3px;font-size:12.3px;line-height:12.3px;color:#585858">$30.00</div>
<div class="a nw" style="left:956.5px;width:300px;text-align:right;top:526.3px;font-size:12.3px;line-height:12.3px;color:#585858">$362.46</div>
<div class="a nw" style="left:1144.5px;width:300px;text-align:right;top:526.3px;font-size:12.3px;line-height:12.3px;color:#585858">$ 2,986.07</div>
<div class="a nw" style="left:1465.5px;top:526.3px;font-size:12.3px;line-height:12.3px;color:#585858">TZ12K</div>
<div class="a nw" style="left:1641.5px;top:526.3px;font-size:12.3px;line-height:12.3px;color:#585858">Available</div>
<div class="a" style="left:211px;top:556.5px;width:1659px;height:50.5px;background:#f4f4f4"></div>
<div class="a" style="left:1268px;top:556.5px;width:187px;height:50.5px;background:#f0f0f0"></div>
<div class="a" style="left:211px;top:606.0px;width:1659px;height:1px;background:#e0e0e0"></div>
<svg class="a" style="left:218px;top:566px" width="38" height="36" viewBox="0 0 38 36"><rect x="4" y="5" width="30" height="26" fill="#fff"/><path d="M10.5 17 Q12 14.5 18 14.5 Q25 14.5 28.5 17.5 Q28 20.5 24 21.5 Q19 24 14 23.5 Q10.5 22 10.5 17 Z" fill="#c3c6ca"/><ellipse cx="20" cy="18.5" rx="5" ry="1.6" fill="#fff"/><circle cx="27.3" cy="18.3" r="1.4" fill="#1d2330"/><circle cx="12.5" cy="21" r="1" fill="#2e3440"/><circle cx="17.5" cy="22.2" r="1" fill="#2e3440"/><circle cx="21.5" cy="20.5" r="0.9" fill="#3b4250"/><circle cx="15" cy="17.5" r="0.9" fill="#7d848c"/></svg>
<div class="a nw" style="left:318.5px;top:576.8px;font-size:12.3px;line-height:12.3px;color:#585858">Fantasy Engagement ring</div>
<div class="a nw" style="left:547.5px;top:576.8px;font-size:12.3px;line-height:12.3px;color:#585858">Styles</div>
<div class="a nw" style="left:502.5px;width:300px;text-align:right;top:576.8px;font-size:12.3px;line-height:12.3px;color:#585858">2.00 ea</div>
<div class="a nw" style="left:678.5px;width:300px;text-align:right;top:576.8px;font-size:12.3px;line-height:12.3px;color:#585858">1.0000</div>
<div class="a nw" style="left:811.5px;width:300px;text-align:right;top:576.8px;font-size:12.3px;line-height:12.3px;color:#585858">$0.00</div>
<div class="a nw" style="left:956.5px;width:300px;text-align:right;top:576.8px;font-size:12.3px;line-height:12.3px;color:#585858">$91.34</div>
<div class="a nw" style="left:1144.5px;width:300px;text-align:right;top:576.8px;font-size:12.3px;line-height:12.3px;color:#585858">$ 2,118.78</div>
<div class="a nw" style="left:1465.5px;top:576.8px;font-size:12.3px;line-height:12.3px;color:#585858">B_DIA</div>
<div class="a nw" style="left:1641.5px;top:576.8px;font-size:12.3px;line-height:12.3px;color:#585858">Available</div>
<div class="a" style="left:211px;top:607.0px;width:1659px;height:50.5px;background:#fff"></div>
<div class="a" style="left:1268px;top:607.0px;width:187px;height:50.5px;background:#f9f9f9"></div>
<div class="a" style="left:211px;top:656.5px;width:1659px;height:1px;background:#e0e0e0"></div>
<svg class="a" style="left:218px;top:616px" width="38" height="36" viewBox="0 0 38 36"><path d="M12 16 Q12.5 11 16 10 L19 8.5 Q21 9 21.5 11 Q25 11.5 26 15 L25 17 Q20 14 15 16.5 Z" fill="#bfc3c8"/><ellipse cx="19" cy="18.5" rx="7.3" ry="4.6" fill="none" stroke="#c5aea4" stroke-width="1.5"/><circle cx="19.2" cy="21.3" r="1.3" fill="#111"/><circle cx="25.4" cy="18.5" r="1.1" fill="#222"/><ellipse cx="19" cy="28.5" rx="7" ry="2.5" fill="none" stroke="#e8e8e8" stroke-width="1.3"/></svg>
<div class="a nw" style="left:318.5px;top:627.3px;font-size:12.3px;line-height:12.3px;color:#585858">Butterfly Ring</div>
<div class="a nw" style="left:547.5px;top:616.6px;font-size:12.3px;line-height:16px;color:#585858">Diamond<br>Engagement Rings</div>
<div class="a nw" style="left:502.5px;width:300px;text-align:right;top:627.3px;font-size:12.3px;line-height:12.3px;color:#585858">3 pcs</div>
<div class="a nw" style="left:678.5px;width:300px;text-align:right;top:627.3px;font-size:12.3px;line-height:12.3px;color:#585858">4 pcs</div>
<div class="a nw" style="left:811.5px;width:300px;text-align:right;top:627.3px;font-size:12.3px;line-height:12.3px;color:#585858">$0.00</div>
<div class="a nw" style="left:956.5px;width:300px;text-align:right;top:627.3px;font-size:12.3px;line-height:12.3px;color:#585858">$798.87</div>
<div class="a nw" style="left:1144.5px;width:300px;text-align:right;top:627.3px;font-size:12.3px;line-height:12.3px;color:#585858">$ 1,276.84</div>
<div class="a nw" style="left:1465.5px;top:627.3px;font-size:12.3px;line-height:12.3px;color:#585858">RY12K</div>
<div class="a nw" style="left:1641.5px;top:627.3px;font-size:12.3px;line-height:12.3px;color:#585858">Available</div>
<div class="a" style="left:211px;top:657.5px;width:1659px;height:50.5px;background:#f4f4f4"></div>
<div class="a" style="left:1268px;top:657.5px;width:187px;height:50.5px;background:#f0f0f0"></div>
<div class="a" style="left:211px;top:707.0px;width:1659px;height:1px;background:#e0e0e0"></div>
<svg class="a" style="left:218px;top:666px" width="38" height="36" viewBox="0 0 38 36"><rect x="4" y="5" width="30" height="26" fill="#fff"/><ellipse cx="19" cy="20.5" rx="11.5" ry="4" fill="none" stroke="#e3a75a" stroke-width="1.5"/><path d="M6.5 19.5 Q9 15.5 15 13.5 M31.5 19.5 Q29 15.5 23.5 13.5" fill="none" stroke="#d9a376" stroke-width="1.5"/><path d="M9 18 Q11 16 14.5 15 M29 18 Q27 16 24 15" stroke="#c6dcee" stroke-width="1"/><path d="M15 11 Q17 9.5 19.4 11.5 Q21.8 9.5 23.8 11 Q24.5 14 19.4 18.5 Q14.3 14 15 11 Z" fill="#d3e3f1" stroke="#8aa0b3" stroke-width="0.8"/><rect x="16.8" y="23" width="2.2" height="1.4" fill="#1a1a1a"/><rect x="22" y="23" width="2" height="1.3" fill="#f2c04c"/></svg>
<div class="a nw" style="left:318.5px;top:677.8px;font-size:12.3px;line-height:12.3px;color:#585858">Heart diamond</div>
<div class="a nw" style="left:547.5px;top:677.8px;font-size:12.3px;line-height:12.3px;color:#585858">Heart diamonds</div>
<div class="a nw" style="left:502.5px;width:300px;text-align:right;top:677.8px;font-size:12.3px;line-height:12.3px;color:#585858">1.50 Ct</div>
<div class="a nw" style="left:678.5px;width:300px;text-align:right;top:677.8px;font-size:12.3px;line-height:12.3px;color:#585858">1.0000 pcs</div>
<div class="a nw" style="left:811.5px;width:300px;text-align:right;top:677.8px;font-size:12.3px;line-height:12.3px;color:#585858">$30.00</div>
<div class="a nw" style="left:956.5px;width:300px;text-align:right;top:677.8px;font-size:12.3px;line-height:12.3px;color:#585858">$300.00</div>
<div class="a nw" style="left:1144.5px;width:300px;text-align:right;top:677.8px;font-size:12.3px;line-height:12.3px;color:#585858">$ 1,350.00</div>
<div class="a nw" style="left:1465.5px;top:677.8px;font-size:12.3px;line-height:12.3px;color:#585858">H_DIA</div>
<div class="a nw" style="left:1641.5px;top:677.8px;font-size:12.3px;line-height:12.3px;color:#585858">Available</div>
<div class="a" style="left:211px;top:708.0px;width:1659px;height:50.5px;background:#fff"></div>
<div class="a" style="left:1268px;top:708.0px;width:187px;height:50.5px;background:#f9f9f9"></div>
<div class="a" style="left:211px;top:757.5px;width:1659px;height:1px;background:#e0e0e0"></div>
<svg class="a" style="left:218px;top:716px" width="38" height="36" viewBox="0 0 38 36"><ellipse cx="19.5" cy="20" rx="11.3" ry="12.8" fill="#e4e6e8"/><ellipse cx="19.5" cy="18.5" rx="9" ry="9.6" fill="#f2f3f4"/><ellipse cx="19.5" cy="17" rx="7.5" ry="6" fill="#d6cdc3"/><circle cx="19.8" cy="21" r="7.2" fill="#a86d44"/><g fill="#c58b60"><circle cx="17" cy="18.5" r="0.8"/><circle cx="21.5" cy="19.5" r="0.9"/><circle cx="23" cy="23" r="0.8"/><circle cx="16.5" cy="23.5" r="0.8"/><circle cx="19.5" cy="25" r="0.7"/></g></svg>
<div class="a nw" style="left:318.5px;top:728.3px;font-size:12.3px;line-height:12.3px;color:#585858">12K Yellow</div>
<div class="a nw" style="left:547.5px;top:728.3px;font-size:12.3px;line-height:12.3px;color:#585858">Casting alloys</div>
<div class="a nw" style="left:502.5px;width:300px;text-align:right;top:728.3px;font-size:12.3px;line-height:12.3px;color:#585858">1.000 g</div>
<div class="a nw" style="left:678.5px;width:300px;text-align:right;top:728.3px;font-size:12.3px;line-height:12.3px;color:#585858">5 pcs</div>
<div class="a nw" style="left:811.5px;width:300px;text-align:right;top:728.3px;font-size:12.3px;line-height:12.3px;color:#585858">$0.00</div>
<div class="a nw" style="left:956.5px;width:300px;text-align:right;top:728.3px;font-size:12.3px;line-height:12.3px;color:#585858">$30.98</div>
<div class="a nw" style="left:1144.5px;width:300px;text-align:right;top:728.3px;font-size:12.3px;line-height:12.3px;color:#585858">$ 30.94</div>
<div class="a nw" style="left:1465.5px;top:728.3px;font-size:12.3px;line-height:12.3px;color:#585858">12KY</div>
<div class="a nw" style="left:1641.5px;top:728.3px;font-size:12.3px;line-height:12.3px;color:#585858">Available</div>
<div class="a" style="left:211px;top:758.5px;width:1659px;height:50.5px;background:#f4f4f4"></div>
<div class="a" style="left:1268px;top:758.5px;width:187px;height:50.5px;background:#f0f0f0"></div>
<svg class="a" style="left:218px;top:766px" width="38" height="36" viewBox="0 0 38 36"><rect x="4" y="5" width="30" height="28" fill="#fff"/><ellipse cx="19.2" cy="17.3" rx="13.8" ry="10.3" fill="#2a7be6"/><ellipse cx="18.5" cy="16.5" rx="9.5" ry="7.5" fill="#6cc6f5"/><ellipse cx="9.5" cy="16.5" rx="3" ry="4.5" fill="#0a2250"/><ellipse cx="18.5" cy="9.5" rx="3" ry="2.2" fill="#0b2150"/><ellipse cx="27" cy="22.5" rx="4" ry="3.2" fill="#0a1d44"/><circle cx="18.5" cy="20.5" r="2.1" fill="#0c1f45"/><ellipse cx="26.5" cy="12.5" rx="2.5" ry="2" fill="#0e2a66"/><ellipse cx="16" cy="14" rx="3.5" ry="2.5" fill="#a9e2fb"/><ellipse cx="18" cy="25.5" rx="4" ry="1.5" fill="#6cc8f5"/></svg>
<div class="a nw" style="left:318.5px;top:778.8px;font-size:12.3px;line-height:12.3px;color:#585858">Topaz</div>
<div class="a nw" style="left:547.5px;top:778.8px;font-size:12.3px;line-height:12.3px;color:#585858">Colored stones</div>
<div class="a nw" style="left:502.5px;width:300px;text-align:right;top:778.8px;font-size:12.3px;line-height:12.3px;color:#585858">6.02 Ct</div>
<div class="a nw" style="left:678.5px;width:300px;text-align:right;top:778.8px;font-size:12.3px;line-height:12.3px;color:#585858">2 pcs</div>
<div class="a nw" style="left:811.5px;width:300px;text-align:right;top:778.8px;font-size:12.3px;line-height:12.3px;color:#585858">$427.96</div>
<div class="a nw" style="left:956.5px;width:300px;text-align:right;top:778.8px;font-size:12.3px;line-height:12.3px;color:#585858">$927.96</div>
<div class="a nw" style="left:1144.5px;width:300px;text-align:right;top:778.8px;font-size:12.3px;line-height:12.3px;color:#585858">1,750.00</div>
<div class="a nw" style="left:1465.5px;top:778.8px;font-size:12.3px;line-height:12.3px;color:#585858">10KPFS</div>
<div class="a nw" style="left:1641.5px;top:778.8px;font-size:12.3px;line-height:12.3px;color:#585858">Available</div>
<div class="a" style="left:211px;top:272px;width:1px;height:581px;background:#e6e6e6"></div>
<div class="a" style="left:1870px;top:304px;width:18px;height:505px;background:#f1f1f1"></div>
<svg class="a" style="left:1874px;top:309px" width="9" height="5" viewBox="0 0 9 5"><path d="M0 5 L4.5 0 L9 5 Z" fill="#a3a3a3"/></svg>
<div class="a" style="left:1872px;top:320px;width:13px;height:95px;background:#c1c1c1"></div>
<svg class="a" style="left:1874px;top:797px" width="9" height="5" viewBox="0 0 9 5"><path d="M0 0 L4.5 5 L9 0 Z" fill="#505050"/></svg>
<div class="a" style="left:211px;top:809px;width:1677px;height:44px;background:#f5f5f5;border-top:1px dotted #d5d5d5;border-bottom:1px solid #dedede"></div>
<svg class="a" style="left:228px;top:826px" width="8" height="9" viewBox="0 0 8 9"><rect x="0" y="0.5" width="1.5" height="8" fill="#b0b0b0"/><path d="M7.5 0.5 V8.5 L2 4.5 Z" fill="#b0b0b0"/></svg>
<svg class="a" style="left:256px;top:826px" width="6" height="9" viewBox="0 0 6 9"><path d="M5.5 0.5 V8.5 L0.5 4.5 Z" fill="#b0b0b0"/></svg>
<div class="a" style="left:272px;top:817px;width:27px;height:27px;background:#e9511c;color:#fff;font-size:13px;line-height:27px;text-align:center">1</div>
<div class="a nw" style="left:308px;top:823px;font-size:13px;line-height:13px;color:#e0505a">2</div>
<svg class="a" style="left:335px;top:826px" width="6" height="9" viewBox="0 0 6 9"><path d="M0.5 0.5 V8.5 L5.5 4.5 Z" fill="#555"/></svg>
<svg class="a" style="left:361px;top:826px" width="8" height="9" viewBox="0 0 8 9"><path d="M0.5 0.5 V8.5 L6 4.5 Z" fill="#555"/><rect x="6.5" y="0.5" width="1.5" height="8" fill="#555"/></svg>
<div class="a" style="left:391px;top:817px;width:55px;height:27px;background:#f2f2f2;border:1px solid #dcdcdc;border-radius:2px"></div>
<div class="a nw" style="left:400px;top:823.5px;font-size:13px;line-height:13px;color:#555">50</div>
<svg class="a" style="left:429px;top:827px" width="8" height="7" viewBox="0 0 8 7"><path d="M0 0 H8 L4 6.5 Z" fill="#444"/></svg>
<div class="a nw" style="left:454px;top:823.5px;font-size:13px;line-height:13px;color:#555">items per page</div>
<div class="a nw" style="left:1567px;width:300px;text-align:right;top:823.5px;font-size:13px;line-height:13px;color:#555">1 - 50 of 61 items</div>
<div class="a nw" style="left:677px;top:816.5px;font-size:52px;line-height:52px;font-weight:700;color:#000;opacity:.09;-webkit-text-stroke:1.6px #000;letter-spacing:2.95px">SoftwareSuggest<span style="font-size:32px;letter-spacing:1.2px;-webkit-text-stroke:1px #000">.com</span></div>
<div class="a" style="left:196px;top:899px;width:1704px;height:41px;background:#f3f5f8;border-top:1px solid #e3e6ea"></div>
<div class="a nw" style="left:209px;top:912px;font-size:12px;line-height:12px;color:#6b7684">© 2009-2020 MindSpark LLC. - All rights reserved.</div>
<div class="a" style="left:1869px;top:443px;width:36px;height:52px;background:#28323e;border-radius:3px 0 0 3px"></div>
<div class="a nw" style="left:1873px;top:463px;font-size:12.5px;line-height:12.5px;color:#f4f4f4;font-weight:700;transform:rotate(-90deg);transform-origin:center">Help</div>
</body></html>
